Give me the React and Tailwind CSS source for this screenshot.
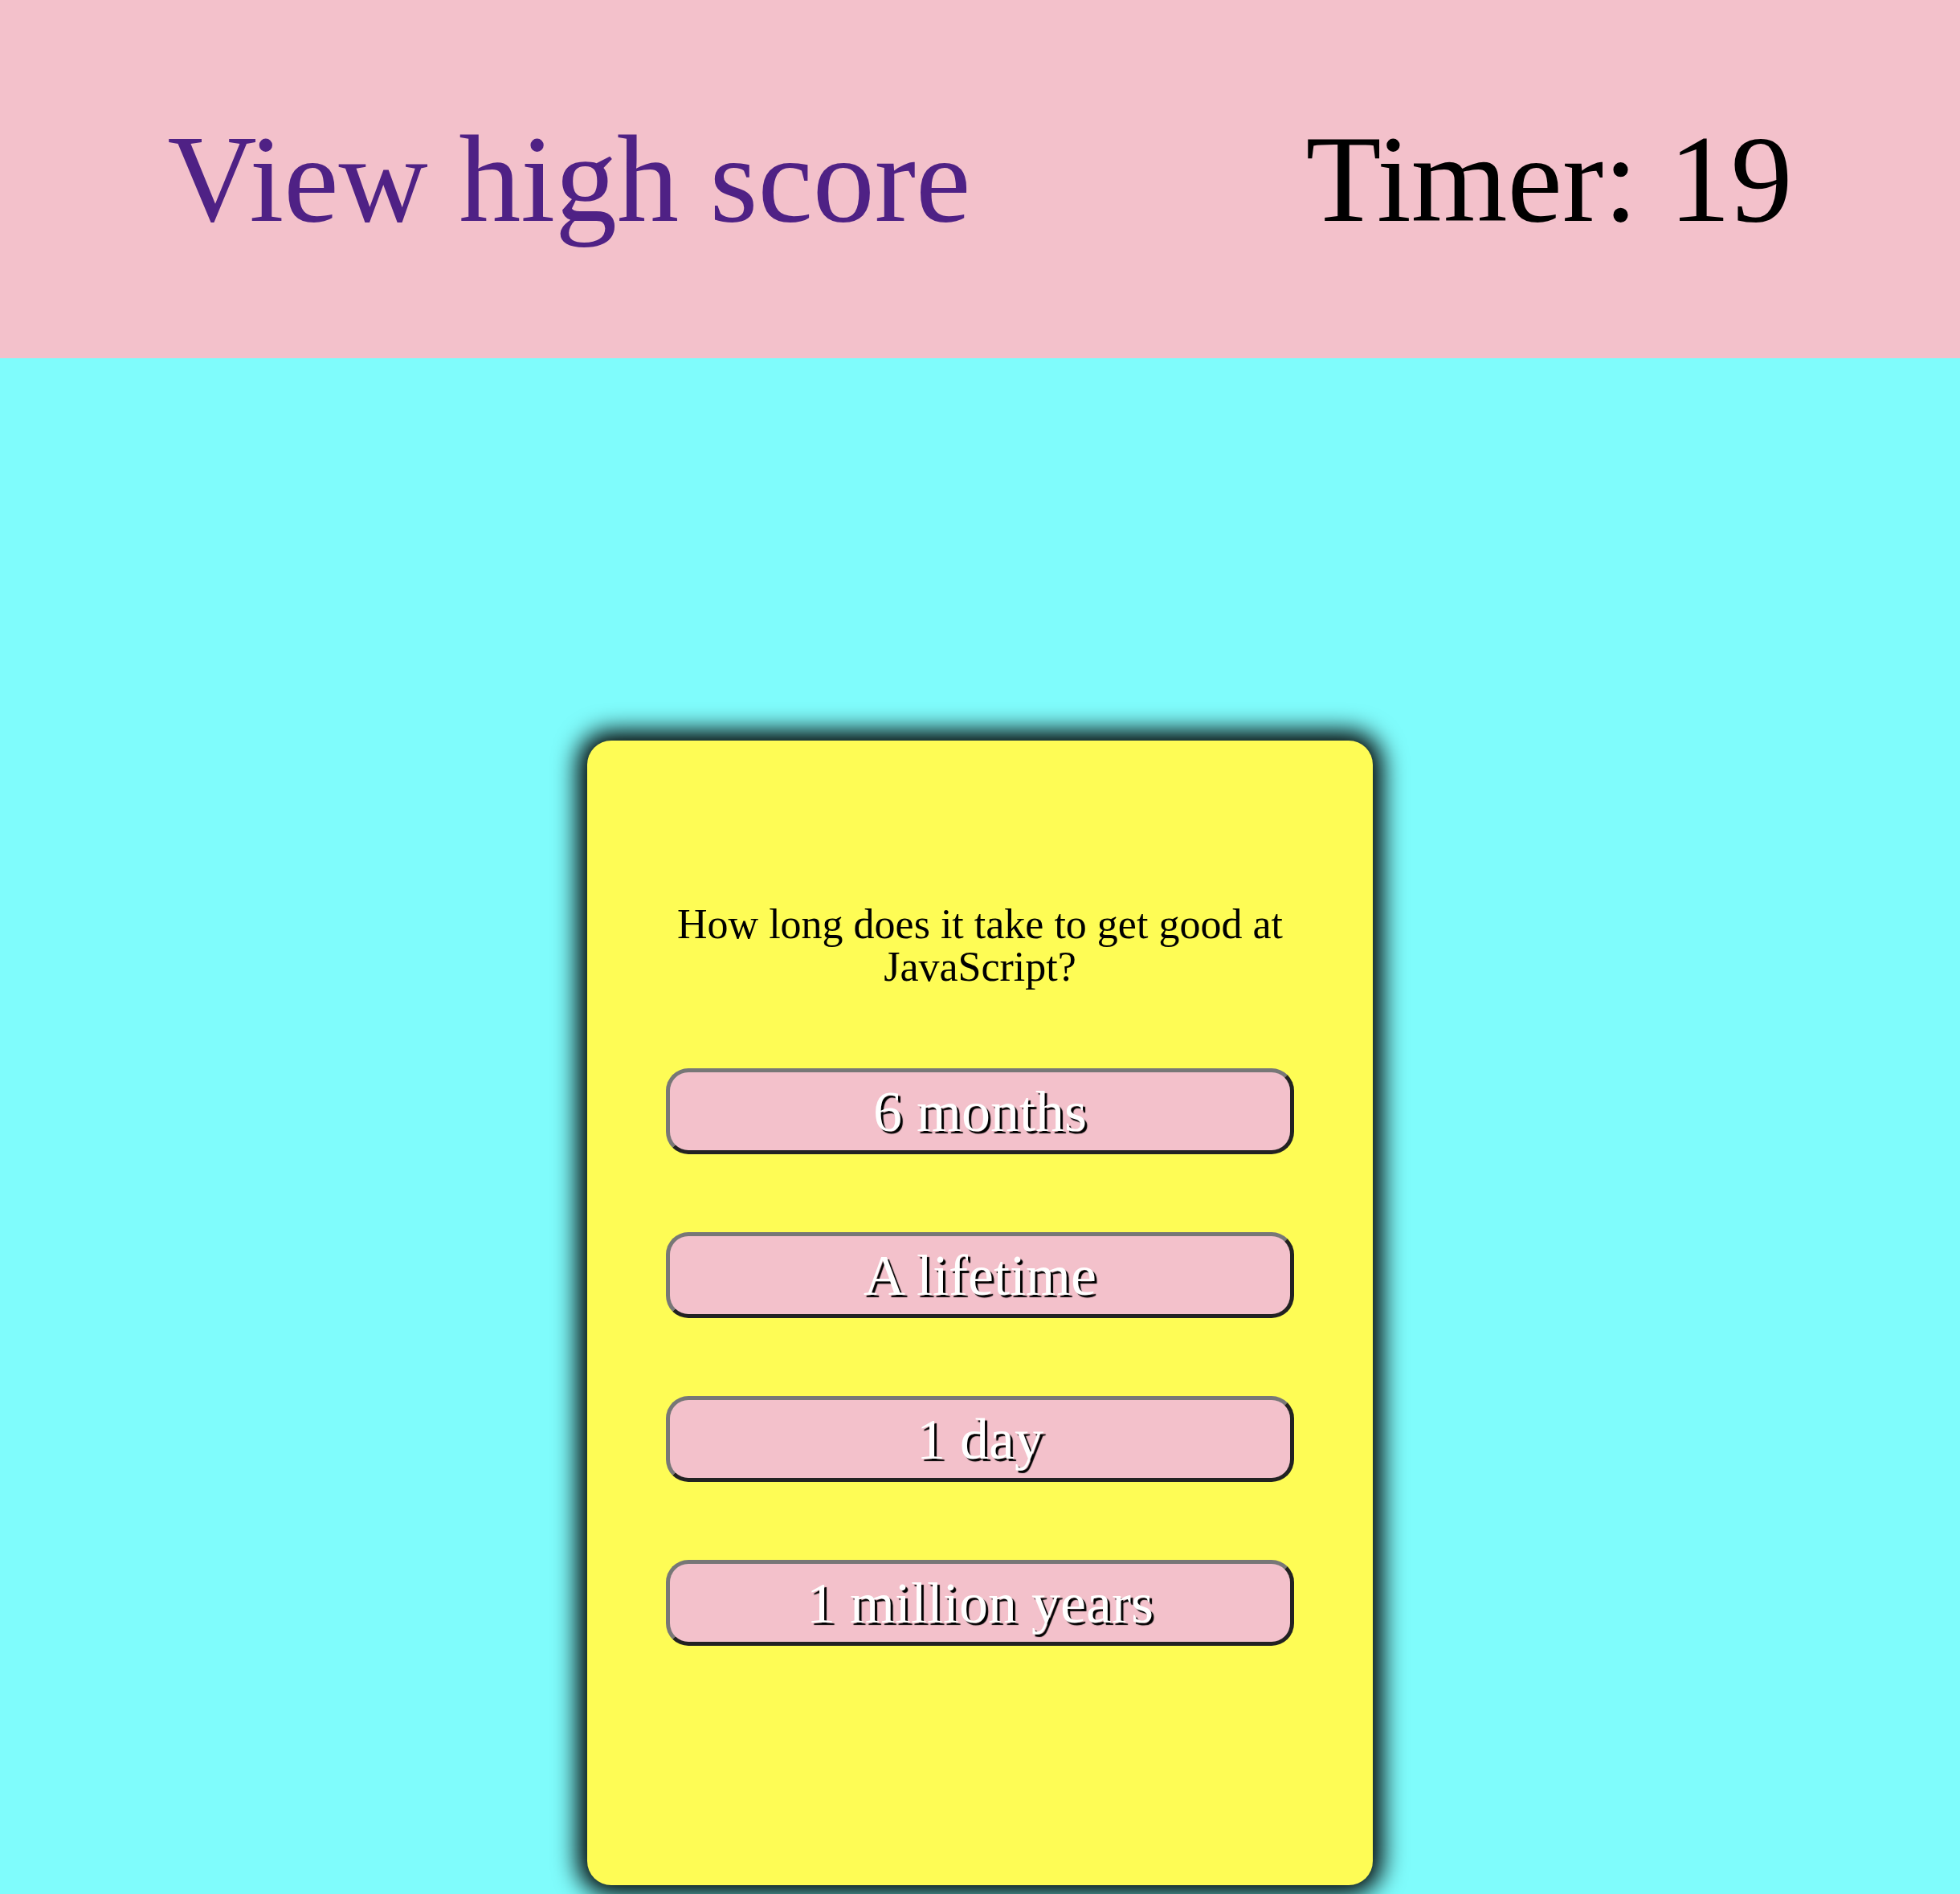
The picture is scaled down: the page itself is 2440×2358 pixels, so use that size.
import { useState } from "react";

const answers = ["6 months", "A lifetime", "1 day", "1 million years"];

export default function App() {
  const [timer] = useState(19);

  return (
    <div className="min-h-screen bg-[#7ffcfc] font-['Liberation_Serif',serif]">
      {/* Header */}
      <header className="h-[446px] bg-[#f3c1cb] flex items-center justify-around">
        <a href="#" className="text-[154px] text-[#4f2185]">
          View high score
        </a>
        <div className="text-[154px] text-black">Timer: {timer}</div>
      </header>

      {/* Quiz card */}
      <main className="pt-[476px]">
        <div className="mx-auto w-[978px] h-[1425px] bg-[#fefc55] rounded-[30px] shadow-[0_0_30px_12px_#000] pt-[202px]">
          <h2 className="mx-auto w-[80%] text-center text-[52px] leading-[53px] text-black">
            How long does it take to get good at JavaScript?
          </h2>
          <div className="mt-[100px] flex flex-col items-center gap-[97px]">
            {answers.map((a) => (
              <button
                key={a}
                className="w-[80%] h-[107px] flex items-center justify-center bg-[#f3c1cb] rounded-[28px] border-[5px] border-t-[#777] border-l-[#777] border-b-[#222] border-r-[#222] text-[72px] text-white [text-shadow:3px_3px_1px_#000]"
              >
                {a}
              </button>
            ))}
          </div>
        </div>
      </main>
    </div>
  );
}
